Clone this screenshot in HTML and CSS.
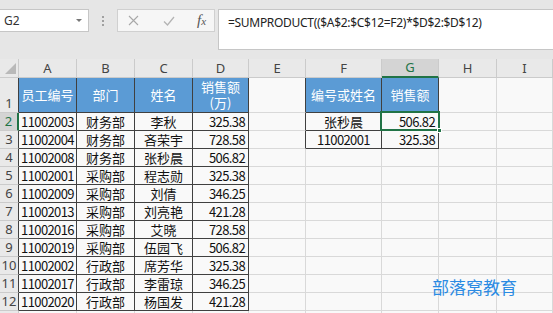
FILE: index.html
```html
<!DOCTYPE html>
<html lang="zh-CN">
<head>
  <meta charset="UTF-8" />
  <title>SUMPRODUCT 查询</title>
  <link rel="stylesheet" href="styles.css">
</head>
<body>
  <!-- name box + formula bar -->
  <div class="bar">
    <div class="namebox"><span>G2</span><span class="drop"></span></div>
    <div class="grip"><i></i><i></i><i></i></div>
    <div class="btns">
      <svg class="ico" width="11" height="11" viewBox="0 0 11 11"><path d="M1 1L10 10M10 1L1 10" stroke="#a8a8a8" stroke-width="1.1" fill="none"/></svg>
      <svg class="ico" width="12" height="10" viewBox="0 0 12 10"><path d="M1 5.5L4.5 9L11 1" stroke="#b4b4b4" stroke-width="1.3" fill="none"/></svg>
      <span class="fx">f<small>x</small></span>
    </div>
    <div class="formula">=SUMPRODUCT(($A$2:$C$12=F2)*$D$2:$D$12)</div>
  </div>

  <!-- worksheet -->
  <div class="sheet">
    <div class="c hd corner"><span class="tri"></span></div>
    <div class="c hd">A</div><div class="c hd">B</div><div class="c hd">C</div><div class="c hd">D</div>
    <div class="c hd">E</div><div class="c hd">F</div><div class="c hd sel">G</div><div class="c hd">H</div><div class="c hd">I</div>

    <div class="c rh dk">1</div>
    <div class="c t blue">员工编号</div><div class="c t blue">部门</div><div class="c t blue">姓名</div><div class="c t blue">销售额<br>(万)</div>
    <div class="c ed"></div><div class="c t blue">编号或姓名</div><div class="c t blue">销售额</div><div class="c"></div><div class="c"></div>

    <div class="c rh selrow">2</div>
    <div class="c t n">11002003</div><div class="c t">财务部</div><div class="c t">李秋</div><div class="c t n r">325.38</div>
    <div class="c ed"></div><div class="c t">张秒晨</div><div class="c t n r active">506.82<span class="handle"></span></div><div class="c"></div><div class="c"></div>

    <div class="c rh dk">3</div>
    <div class="c t n">11002004</div><div class="c t">财务部</div><div class="c t">吝荣宇</div><div class="c t n r">728.58</div>
    <div class="c ed"></div><div class="c t n">11002001</div><div class="c t n r">325.38</div><div class="c"></div><div class="c"></div>

    <div class="c rh dk">4</div>
    <div class="c t n">11002008</div><div class="c t">财务部</div><div class="c t">张秒晨</div><div class="c t n r">506.82</div>
    <div class="c"></div><div class="c"></div><div class="c"></div><div class="c"></div><div class="c"></div>

    <div class="c rh dk">5</div>
    <div class="c t n">11002001</div><div class="c t">采购部</div><div class="c t">程志勋</div><div class="c t n r">325.38</div>
    <div class="c"></div><div class="c"></div><div class="c"></div><div class="c"></div><div class="c"></div>

    <div class="c rh dk">6</div>
    <div class="c t n">11002009</div><div class="c t">采购部</div><div class="c t">刘倩</div><div class="c t n r">346.25</div>
    <div class="c"></div><div class="c"></div><div class="c"></div><div class="c"></div><div class="c"></div>

    <div class="c rh dk">7</div>
    <div class="c t n">11002013</div><div class="c t">采购部</div><div class="c t">刘亮艳</div><div class="c t n r">421.28</div>
    <div class="c"></div><div class="c"></div><div class="c"></div><div class="c"></div><div class="c"></div>

    <div class="c rh dk">8</div>
    <div class="c t n">11002016</div><div class="c t">采购部</div><div class="c t">艾晓</div><div class="c t n r">728.58</div>
    <div class="c"></div><div class="c"></div><div class="c"></div><div class="c"></div><div class="c"></div>

    <div class="c rh dk">9</div>
    <div class="c t n">11002019</div><div class="c t">采购部</div><div class="c t">伍园飞</div><div class="c t n r">506.82</div>
    <div class="c"></div><div class="c"></div><div class="c"></div><div class="c"></div><div class="c"></div>

    <div class="c rh dk">10</div>
    <div class="c t n">11002002</div><div class="c t">行政部</div><div class="c t">席芳华</div><div class="c t n r">325.38</div>
    <div class="c"></div><div class="c"></div><div class="c"></div><div class="c"></div><div class="c"></div>

    <div class="c rh dk">11</div>
    <div class="c t n">11002017</div><div class="c t">行政部</div><div class="c t">李雷琼</div><div class="c t n r">346.25</div>
    <div class="c"></div><div class="c"></div><div class="c"></div><div class="c"></div><div class="c"></div>

    <div class="c rh dk">12</div>
    <div class="c t n">11002020</div><div class="c t">行政部</div><div class="c t">杨国发</div><div class="c t n r">421.28</div>
    <div class="c"></div><div class="c"></div><div class="c"></div><div class="c"></div><div class="c"></div>

    <div class="c rh"></div>
    <div class="c"></div><div class="c"></div><div class="c"></div><div class="c"></div>
    <div class="c"></div><div class="c"></div><div class="c"></div><div class="c"></div><div class="c"></div>

    <div class="mark">部落窝教育</div>
  </div>
</body>
</html>
```

FILE: styles.css
```css
/* Global */
* {
  box-sizing: border-box;
}
body {
  margin: 0;
  width: 553px;
  height: 313px;
  overflow: hidden;
  background-color: #f8f8f8;
  font-family: "Noto Sans", "Noto Sans CJK SC", sans-serif;
  color: #222;
}

/* Formula bar */
.bar {
  height: 59px;
  padding-top: 9px;
  display: flex;
  align-items: flex-start;
  background-color: #e6e6e6;
}
.namebox {
  width: 89px;
  height: 23px;
  padding: 0 6px 0 4px;
  display: flex;
  align-items: center;
  justify-content: space-between;
  background-color: #fff;
  border: 1px solid #c6c6c6;
  border-left: none;
  font-size: 12px;
  color: #333;
}
.drop {
  width: 0;
  height: 0;
  border-left: 3px solid transparent;
  border-right: 3px solid transparent;
  border-top: 3px solid #777;
}
.grip {
  width: 3px;
  margin: 7px 12px 0 13px;
  display: flex;
  flex-direction: column;
  gap: 2px;
}
.grip i {
  width: 2px;
  height: 2px;
  background-color: #a0a0a0;
}
.btns {
  width: 98px;
  height: 23px;
  padding: 0 0 0 10px;
  display: flex;
  align-items: center;
  background-color: #f6f6f6;
  border: 1px solid #d0d0d0;
}
.ico {
  margin-right: 24px;
}
.btns .ico + .ico {
  margin-right: 22px;
}
.fx {
  font-family: "Liberation Serif", serif;
  font-style: italic;
  font-size: 15px;
  color: #555;
}
.fx small {
  font-size: 11px;
}
.formula {
  flex: 1;
  height: 41px;
  margin-left: 3px;
  padding: 4px 9px;
  background-color: #fff;
  border: 1px solid #c6c6c6;
  border-right: none;
  font-size: 12px;
  letter-spacing: -0.3px;
  color: #222;
}

/* Sheet grid */
.sheet {
  position: relative;
  display: grid;
  grid-template-columns: 19px 58px 58px 58px 56px 57px 76px 57px 58px 1fr;
  grid-template-rows: 19px 35px repeat(11, 18px) 18px;
  font-family: "Noto Sans CJK SC", sans-serif;
  font-size: 13px;
}
.c {
  display: flex;
  align-items: flex-end;
  justify-content: center;
  padding: 0 3px;
  line-height: 17px;
  white-space: nowrap;
  overflow: hidden;
  border-right: 1px solid #d9d9d9;
  border-bottom: 1px solid #d9d9d9;
  background-color: #f9f9f9;
  color: #111;
}
.hd {
  align-items: center;
  background-color: #e9e9e9;
  border-color: #cbcbcb;
  font-family: "Noto Sans", sans-serif;
  font-size: 13px;
  color: #444;
}
.hd.sel {
  background-color: #d4d4d4;
  color: #217346;
  border-bottom: 2px solid #217346;
}
.corner {
  position: relative;
}
.tri {
  position: absolute;
  right: 2px;
  bottom: 3px;
  width: 0;
  height: 0;
  border-left: 11px solid transparent;
  border-bottom: 11px solid #b9b9b9;
}
.rh {
  padding: 0;
  background-color: #e9e9e9;
  border-color: #cbcbcb;
  font-family: "Noto Sans", sans-serif;
  font-size: 13px;
  color: #444;
}
.rh.dk {
  border-right-color: #404040;
}
.rh.selrow {
  background-color: #d4d4d4;
  color: #217346;
  border-right: 2px solid #217346;
}
.t {
  border-right-color: #404040;
  border-bottom-color: #404040;
}
.ed {
  border-right-color: #404040;
}
.blue {
  align-items: center;
  text-align: center;
  line-height: 16px;
  background-color: #5b9bd5;
  color: #fff;
  font-size: 13px;
}
.n {
  letter-spacing: -0.6px;
}
.r {
  justify-content: flex-end;
}
.active {
  position: relative;
  overflow: visible;
}
.active::after {
  content: "";
  position: absolute;
  top: -2px;
  left: -2px;
  right: -2px;
  bottom: -1px;
  border: 2px solid #217346;
}
.handle {
  position: absolute;
  right: -4px;
  bottom: -3px;
  width: 5px;
  height: 5px;
  background-color: #217346;
  border: 1px solid #fff;
  z-index: 1;
}
.mark {
  position: absolute;
  left: 432px;
  top: 218px;
  font-size: 17px;
  line-height: 20px;
  color: #2b8be3;
}
```
